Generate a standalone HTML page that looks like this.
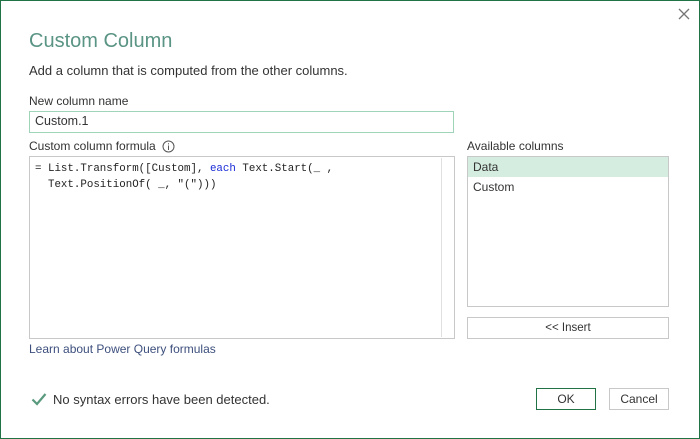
<!DOCTYPE html>
<html><head><style>
*{margin:0;padding:0;box-sizing:border-box}
body{width:700px;height:439px;background:#fff;font-family:"Segoe UI","Liberation Sans",sans-serif;color:#333;position:relative;overflow:hidden}
.frame{position:absolute;left:0;top:0;width:700px;height:439px;border:1px solid #217346}
.a{position:absolute;white-space:nowrap}
.mono{font-family:"Liberation Mono","DejaVu Sans Mono",monospace;font-size:10.8px;color:#222}
</style></head><body>
<div class="frame"></div>
<svg class="a" style="left:677px;top:7px" width="14" height="14"><path d="M2 2L12 12M12 2L2 12" stroke="#777" stroke-width="1.3"/></svg>
<div class="a" style="left:29px;top:30px;font-size:20px;color:#5a9484">Custom Column</div>
<div class="a" style="left:29px;top:63px;font-size:13px">Add a column that is computed from the other columns.</div>
<div class="a" style="left:29px;top:94px;font-size:12px">New column name</div>
<div class="a" style="left:29px;top:111px;width:425px;height:22px;border:1px solid #9fd4b8"></div>
<div class="a" style="left:35px;top:114px;font-size:12.5px">Custom.1</div>
<div class="a" style="left:29px;top:139px;font-size:12px">Custom column formula</div>
<svg class="a" style="left:162px;top:140px" width="13" height="13"><circle cx="6.5" cy="6.5" r="5.5" fill="none" stroke="#555" stroke-width="1"/><path d="M6.5 5.5V10M6.5 3.2V4.4" stroke="#555"/></svg>
<div class="a" style="left:29px;top:156px;width:426px;height:183px;border:1px solid #c8c8c8"></div>
<div class="a" style="left:441px;top:158px;width:12px;height:179px;border-left:1px solid #e0e0e0"></div>
<div class="a mono" style="left:35px;top:161px;line-height:16px">= List.Transform([Custom], <span style="color:#1a2bd6">each</span> Text.Start(_ ,<br>&nbsp;&nbsp;Text.PositionOf( _, "("))) </div>
<div class="a" style="left:467px;top:139px;font-size:12px">Available columns</div>
<div class="a" style="left:467px;top:156px;width:202px;height:151px;border:1px solid #c8c8c8"></div>
<div class="a" style="left:468px;top:157px;width:200px;height:20px;background:#d5ede0"></div>
<div class="a" style="left:473px;top:160px;font-size:12px">Data</div>
<div class="a" style="left:473px;top:180px;font-size:12px">Custom</div>
<div class="a" style="left:467px;top:317px;width:202px;height:22px;border:1px solid #c8c8c8;font-size:11.5px;text-align:center;line-height:20px">&lt;&lt; Insert</div>
<div class="a" style="left:29px;top:342px;font-size:12px;color:#3d4f7d">Learn about Power Query formulas</div>
<svg class="a" style="left:31px;top:392px" width="16" height="14"><path d="M1.5 7.5L6 12L14.5 2" fill="none" stroke="#5a9a7e" stroke-width="2.2"/></svg>
<div class="a" style="left:53px;top:392px;font-size:13px">No syntax errors have been detected.</div>
<div class="a" style="left:536px;top:388px;width:60px;height:22px;border:1px solid #217346;font-size:12px;text-align:center;line-height:20px">OK</div>
<div class="a" style="left:609px;top:388px;width:60px;height:22px;border:1px solid #c8c8c8;font-size:12px;text-align:center;line-height:20px">Cancel</div>
</body></html>
